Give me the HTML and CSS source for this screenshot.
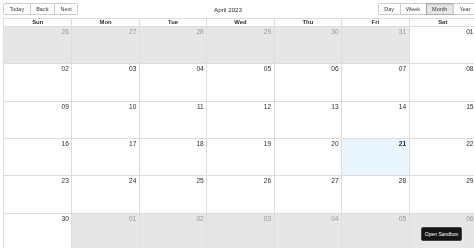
FILE: index.html
```html
<!DOCTYPE html>
<html>
<head>
<meta charset="utf-8">
<link rel="stylesheet" href="styles.css">
</head>
<body>
<div class="cal">
  <div class="toolbar">
    <div class="group">
      <button class="btn first">Today</button>
      <button class="btn">Back</button>
      <button class="btn last">Next</button>
    </div>
    <div class="label">April 2023</div>
    <div class="group">
      <button class="btn first">Day</button>
      <button class="btn">Week</button>
      <button class="btn active">Month</button>
      <button class="btn last">Year</button>
    </div>
  </div>
  <div class="month">
    <div class="head">
      <div class="hcell">Sun</div><div class="hcell">Mon</div><div class="hcell">Tue</div><div class="hcell">Wed</div><div class="hcell">Thu</div><div class="hcell">Fri</div><div class="hcell">Sat</div>
    </div>
    <div class="row">
      <div class="cell off">26</div><div class="cell off">27</div><div class="cell off">28</div><div class="cell off">29</div><div class="cell off">30</div><div class="cell off">31</div><div class="cell">01</div>
    </div>
    <div class="row">
      <div class="cell">02</div><div class="cell">03</div><div class="cell">04</div><div class="cell">05</div><div class="cell">06</div><div class="cell">07</div><div class="cell">08</div>
    </div>
    <div class="row">
      <div class="cell">09</div><div class="cell">10</div><div class="cell">11</div><div class="cell">12</div><div class="cell">13</div><div class="cell">14</div><div class="cell">15</div>
    </div>
    <div class="row">
      <div class="cell">16</div><div class="cell">17</div><div class="cell">18</div><div class="cell">19</div><div class="cell">20</div><div class="cell today">21</div><div class="cell">22</div>
    </div>
    <div class="row">
      <div class="cell">23</div><div class="cell">24</div><div class="cell">25</div><div class="cell">26</div><div class="cell">27</div><div class="cell">28</div><div class="cell">29</div>
    </div>
    <div class="row">
      <div class="cell">30</div><div class="cell off">01</div><div class="cell off">02</div><div class="cell off">03</div><div class="cell off">04</div><div class="cell off">05</div><div class="cell off">06</div>
    </div>
  </div>
</div>
<button class="sandbox">Open Sandbox</button>
</body>
</html>
```
FILE: styles.css
```css
html, body {
  margin: 0;
  padding: 0;
  width: 474px;
  height: 248px;
  overflow: hidden;
  background: #fff;
}
body {
  font-family: "Liberation Sans", Arial, sans-serif;
  color: #2b2d2f;
  position: relative;
}
.cal {
  margin: 3px 0 0 3px;
  width: 474px;
  height: 248px;
  display: flex;
  flex-direction: column;
  transform: translateZ(0);
  -webkit-font-smoothing: antialiased;
}
.toolbar {
  display: flex;
  align-items: center;
  margin-bottom: 3px;
}
.group {
  display: flex;
}
.btn {
  font-family: inherit;
  font-size: 5.5px;
  line-height: 6px;
  color: #373a3c;
  background: #fff;
  border: 1px solid #ccc;
  margin: 0 0 0 -1px;
  padding: 2px 5.5px;
  border-radius: 0;
}
.btn.first {
  margin-left: 0;
  border-radius: 2px 0 0 2px;
}
.btn.last {
  border-radius: 0 2px 2px 0;
}
.btn.active {
  background: #e6e6e6;
  border-color: #adadad;
  box-shadow: inset 0 1px 2px rgba(0,0,0,0.125);
}
.label {
  flex: 1;
  text-align: center;
  font-size: 6.2px;
  line-height: 7px;
  color: #2b2d2f;
}
.month {
  flex: 1;
  display: flex;
  flex-direction: column;
  border: 1px solid #ddd;
}
.head {
  display: grid;
  grid-template-columns: repeat(7, 1fr);
  border-bottom: 1px solid #ddd;
}
.hcell {
  text-align: center;
  font-weight: bold;
  font-size: 5.9px;
  line-height: 7px;
  padding: 0 3px;
  border-left: 1px solid #ddd;
}
.hcell:first-child {
  border-left: none;
}
.row {
  flex: 1;
  display: grid;
  grid-template-columns: repeat(7, 1fr);
  border-top: 1px solid #ddd;
}
.head + .row {
  border-top: none;
}
.cell {
  border-left: 1px solid #ddd;
  text-align: right;
  padding: 1px 2.5px 0 0;
  font-size: 6.6px;
  line-height: 8px;
}
.cell:first-child {
  border-left: none;
}
.cell.off {
  background: #e6e6e6;
  color: #999;
}
.cell.today {
  background: #eaf6ff;
  font-weight: bold;
}
.sandbox {
  position: absolute;
  left: 421px;
  top: 227px;
  width: 41px;
  height: 14px;
  padding: 0;
  background: #151515;
  color: #fff;
  border: 1px solid #444;
  border-radius: 2px;
  font-family: "Liberation Sans", Arial, sans-serif;
  font-size: 5px;
  line-height: 12px;
  text-align: center;
}
```
